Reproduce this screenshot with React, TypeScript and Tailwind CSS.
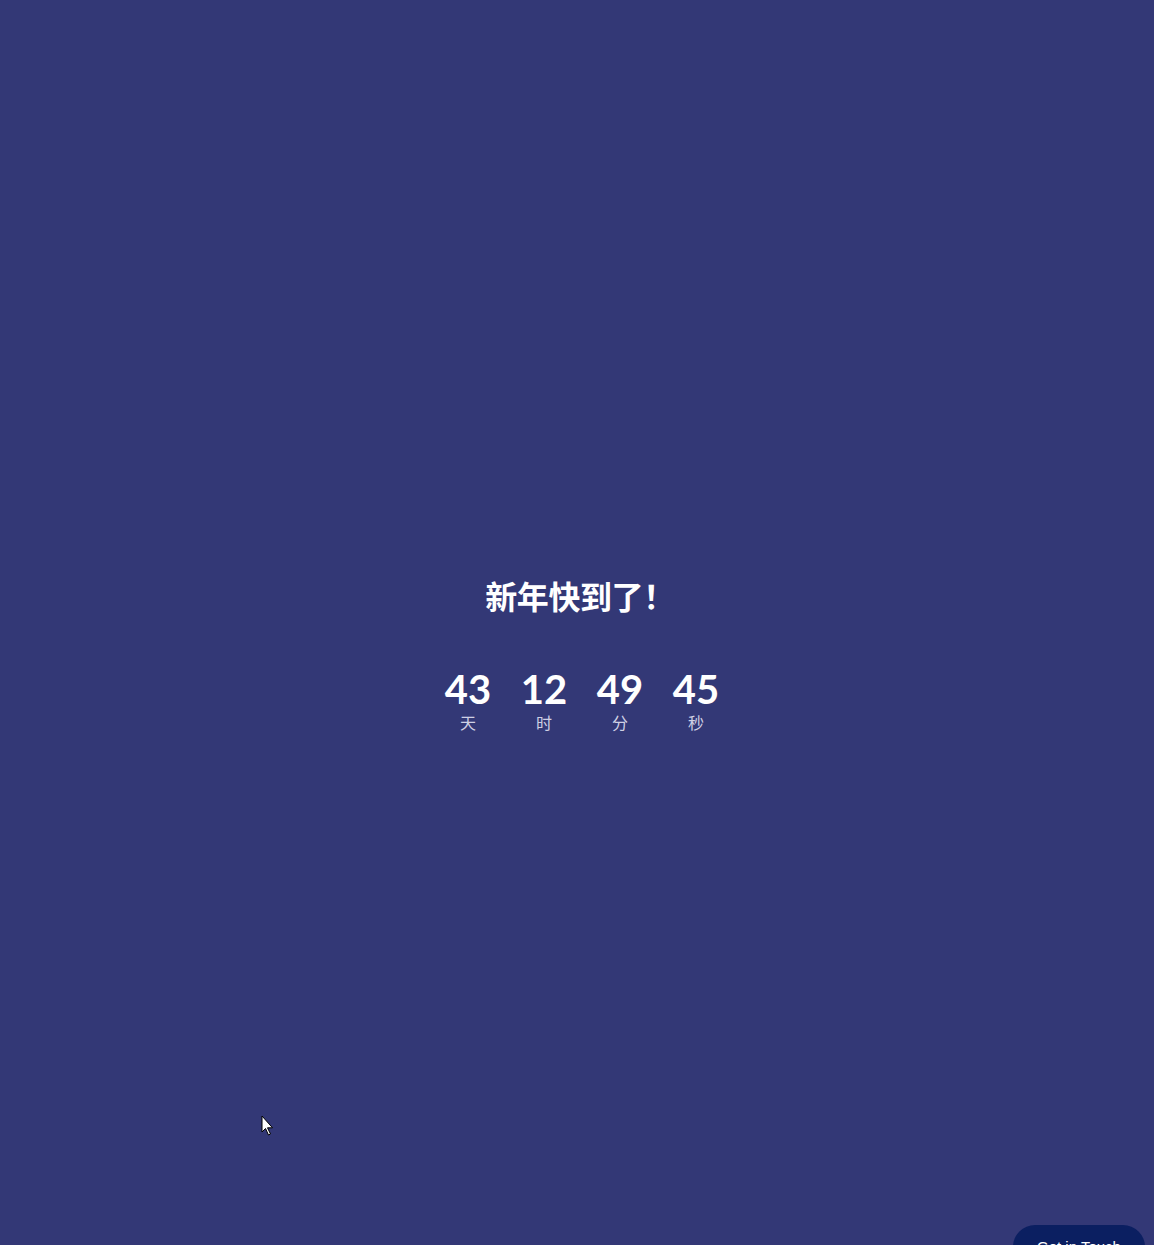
import React from "react";

const items = [
  { n: "43", l: "天" },
  { n: "12", l: "时" },
  { n: "49", l: "分" },
  { n: "45", l: "秒" },
];

export default function App() {
  return (
    <div
      className="relative h-[1245px] w-full overflow-hidden bg-[#333876] text-white"
      style={{ fontFamily: '"Noto Sans CJK SC", "Noto Sans", sans-serif' }}
    >
      <div className="flex flex-col items-center pt-[571px]">
        <h1 className="ml-[6px] text-[32px] font-bold leading-[48px] tracking-[-0.4px]">新年快到了！</h1>
        <div className="mt-[52px] ml-[10px] flex justify-center">
          {items.map((it) => (
            <div key={it.l} className="flex w-[76px] flex-col items-center">
              <div
                className="text-[40px] font-bold leading-[36px]"
                style={{ fontFamily: 'Lato, "Noto Sans", sans-serif' }}
              >
                {it.n}
              </div>
              <div className="mt-[5px] text-[16px] leading-[20px] text-[#cfd0e4]">{it.l}</div>
            </div>
          ))}
        </div>
      </div>

      <svg
        className="absolute left-[261px] top-[1115px]"
        width="14"
        height="22"
        viewBox="0 0 14 22"
      >
        <path
          d="M1 1 L1 17 L4.5 13.5 L7.5 20 L9.5 19 L6.5 12.8 L11.5 12.8 Z"
          fill="#ffffff"
          stroke="#000000"
          strokeWidth="1"
          strokeLinejoin="round"
        />
      </svg>

      <button
        className="absolute left-[1013px] top-[1225px] rounded-full bg-[#0b1f61] px-[24px] py-[12px] text-[15px] leading-[20px] text-white"
        style={{ fontFamily: '"Liberation Sans", Arial, sans-serif' }}
      >
        Get in Touch
      </button>
    </div>
  );
}
